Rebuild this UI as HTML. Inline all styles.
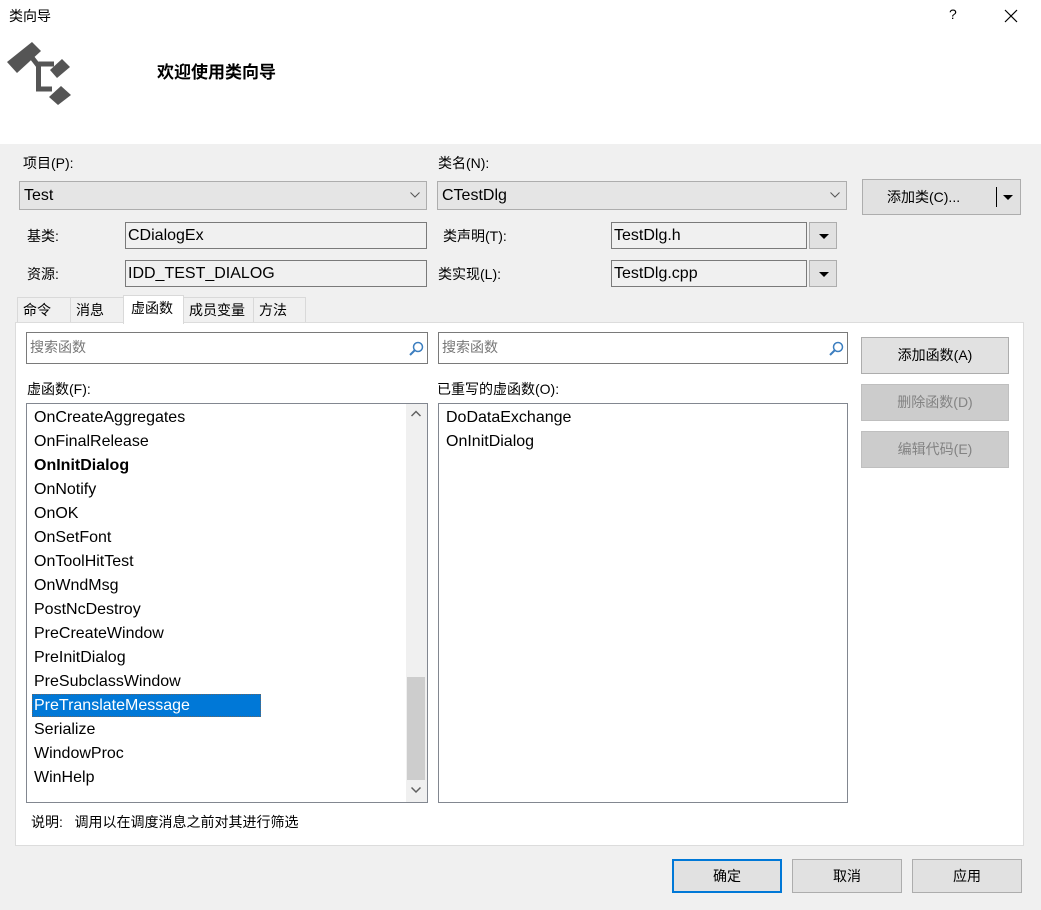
<!DOCTYPE html>
<html><head><meta charset="utf-8"><style>
*{margin:0;padding:0;box-sizing:border-box}
body{width:1041px;height:910px;background:#f0f0f0;font-family:"Liberation Sans","Noto Sans CJK SC",sans-serif;font-size:15px;color:#000;position:relative;overflow:hidden}
.a{position:absolute;white-space:nowrap}
.lbl{position:absolute;line-height:20px;white-space:nowrap}
.combo{position:absolute;background:#e5e5e5;border:1px solid #adadad;height:29px;line-height:27px;padding-left:4px;font-size:16px}
.fld{position:absolute;background:#f0f0f0;border:1px solid #7a7a7a;height:27px;line-height:25px;padding-left:2px;font-size:16px}
.dd{position:absolute;width:28px;height:27px;background:#e1e1e1;border:1px solid #adadad}
.tri{position:absolute;left:9px;top:11px;width:0;height:0;border-left:5px solid transparent;border-right:5px solid transparent;border-top:5px solid #000}
.btn{position:absolute;background:#e1e1e1;border:1px solid #adadad;text-align:center;font-size:14px}
.dis{background:#cccccc;border-color:#bfbfbf;color:#838383}
.tab{position:absolute;top:297px;height:25px;background:#f0f0f0;border:1px solid #d9d9d9;border-bottom:none;line-height:24px;padding-left:5px;font-size:14px}
.item{position:absolute;left:34px;line-height:20px;font-size:16px}
</style></head><body>
<div class="a" style="left:0;top:0;width:1041px;height:144px;background:#fff"></div>
<div class="a" style="left:9px;top:6px;font-size:14px">类向导</div>
<div class="a" style="left:949px;top:6px;font-size:14px">?</div>
<svg class="a" style="left:1003px;top:8px" width="16" height="16"><path d="M2 2L14 14M14 2L2 14" stroke="#000" stroke-width="1.2"/></svg>
<svg class="a" style="left:0;top:35px" width="80" height="80">
<g fill="#555">
<polygon points="7,27 32,7 41,16 17,38"/>
<polygon points="50,35 62,24 70,32 57,43"/>
<polygon points="49,62 61,51 71,60 58,70"/>
</g>
<path d="M30 20 L38.5 31 L38.5 54 L52 54 M38.5 29 L54 29" stroke="#555" stroke-width="5" fill="none"/>
</svg>
<div class="a" style="left:157px;top:58px;font-size:17px;font-weight:bold">欢迎使用类向导</div>

<div class="lbl" style="left:23px;top:153px;font-size:14px">项目(P):</div>
<div class="lbl" style="left:438px;top:153px;font-size:14px">类名(N):</div>
<div class="combo" style="left:19px;top:181px;width:408px">Test<svg class="a" style="right:6px;top:10px" width="10" height="6"><path d="M0.5 0.5L5 5L9.5 0.5" stroke="#555" fill="none"/></svg></div>
<div class="combo" style="left:437px;top:181px;width:410px">CTestDlg<svg class="a" style="right:6px;top:10px" width="10" height="6"><path d="M0.5 0.5L5 5L9.5 0.5" stroke="#555" fill="none"/></svg></div>
<div class="btn" style="left:862px;top:179px;width:159px;height:36px;line-height:34px;text-align:left;padding-left:24px">添加类(C)...<div class="a" style="left:133px;top:7px;width:1px;height:20px;background:#000"></div><div class="tri" style="left:140px;top:15px"></div></div>

<div class="lbl" style="left:27px;top:226px;font-size:14px">基类:</div>
<div class="lbl" style="left:27px;top:264px;font-size:14px">资源:</div>
<div class="fld" style="left:125px;top:222px;width:302px">CDialogEx</div>
<div class="fld" style="left:125px;top:260px;width:302px">IDD_TEST_DIALOG</div>
<div class="lbl" style="left:443px;top:226px;font-size:14px">类声明(T):</div>
<div class="lbl" style="left:438px;top:264px;font-size:14px">类实现(L):</div>
<div class="fld" style="left:611px;top:222px;width:196px">TestDlg.h</div>
<div class="fld" style="left:611px;top:260px;width:196px">TestDlg.cpp</div>
<div class="dd" style="left:809px;top:222px"><div class="tri"></div></div>
<div class="dd" style="left:809px;top:260px"><div class="tri"></div></div>

<div class="tab" style="left:17px;width:54px">命令</div>
<div class="tab" style="left:70px;width:54px">消息</div>
<div class="tab" style="left:183px;width:71px">成员变量</div>
<div class="tab" style="left:253px;width:53px">方法</div>
<div class="a" style="left:15px;top:322px;width:1009px;height:524px;background:#fff;border:1px solid #dcdcdc"></div>
<div class="tab" style="left:123px;top:295px;width:61px;height:29px;background:#fff;z-index:2;padding-left:7px">虚函数</div>

<div class="a" style="left:26px;top:332px;width:402px;height:32px;border:1px solid #7a7a7a;background:#fff;line-height:29px;padding-left:3px;color:#777;font-size:14px">搜索函数<svg class="a" style="right:3px;top:8px" width="16" height="16"><circle cx="10" cy="6" r="4.5" stroke="#3c7ebf" stroke-width="1.5" fill="none"/><path d="M7 9L2 14" stroke="#3c7ebf" stroke-width="2"/></svg></div>
<div class="a" style="left:438px;top:332px;width:410px;height:32px;border:1px solid #7a7a7a;background:#fff;line-height:29px;padding-left:3px;color:#777;font-size:14px">搜索函数<svg class="a" style="right:3px;top:8px" width="16" height="16"><circle cx="10" cy="6" r="4.5" stroke="#3c7ebf" stroke-width="1.5" fill="none"/><path d="M7 9L2 14" stroke="#3c7ebf" stroke-width="2"/></svg></div>

<div class="btn" style="left:861px;top:337px;width:148px;height:37px;line-height:35px">添加函数(A)</div>
<div class="btn dis" style="left:861px;top:384px;width:148px;height:37px;line-height:35px">删除函数(D)</div>
<div class="btn dis" style="left:861px;top:431px;width:148px;height:37px;line-height:35px">编辑代码(E)</div>

<div class="lbl" style="left:27px;top:379px;font-size:14px">虚函数(F):</div>
<div class="lbl" style="left:437px;top:379px;font-size:14px">已重写的虚函数(O):</div>

<div class="a" style="left:26px;top:403px;width:402px;height:400px;border:1px solid #828790;background:#fff"></div>
<div class="a" style="left:406px;top:404px;width:21px;height:398px;background:#f0f0f0"></div>
<div class="a" style="left:407px;top:677px;width:18px;height:103px;background:#cdcdcd"></div>
<svg class="a" style="left:411px;top:410px" width="10" height="8"><path d="M0.5 6L5 1.5L9.5 6" stroke="#606060" stroke-width="1.5" fill="none"/></svg>
<svg class="a" style="left:411px;top:786px" width="10" height="8"><path d="M0.5 1.5L5 6L9.5 1.5" stroke="#606060" stroke-width="1.5" fill="none"/></svg>
<div class="a" style="left:32px;top:694px;width:229px;height:23px;background:#0078d7;border:1px dotted #666"></div>
<div class="item" style="top:408px">OnCreateAggregates</div>
<div class="item" style="top:432px">OnFinalRelease</div>
<div class="item" style="top:456px;font-weight:bold">OnInitDialog</div>
<div class="item" style="top:480px">OnNotify</div>
<div class="item" style="top:504px">OnOK</div>
<div class="item" style="top:528px">OnSetFont</div>
<div class="item" style="top:552px">OnToolHitTest</div>
<div class="item" style="top:576px">OnWndMsg</div>
<div class="item" style="top:600px">PostNcDestroy</div>
<div class="item" style="top:624px">PreCreateWindow</div>
<div class="item" style="top:648px">PreInitDialog</div>
<div class="item" style="top:672px">PreSubclassWindow</div>
<div class="item" style="top:696px;color:#fff">PreTranslateMessage</div>
<div class="item" style="top:720px">Serialize</div>
<div class="item" style="top:744px">WindowProc</div>
<div class="item" style="top:768px">WinHelp</div>

<div class="a" style="left:438px;top:403px;width:410px;height:400px;border:1px solid #828790;background:#fff"></div>
<div class="item" style="left:446px;top:408px">DoDataExchange</div>
<div class="item" style="left:446px;top:432px">OnInitDialog</div>

<div class="lbl" style="left:31px;top:812px;font-size:14px">说明:&nbsp;&nbsp; 调用以在调度消息之前对其进行筛选</div>

<div class="btn" style="left:672px;top:859px;width:110px;height:34px;line-height:30px;border:2px solid #0078d7">确定</div>
<div class="btn" style="left:792px;top:859px;width:110px;height:34px;line-height:32px">取消</div>
<div class="btn" style="left:912px;top:859px;width:110px;height:34px;line-height:32px">应用</div>
</body></html>
